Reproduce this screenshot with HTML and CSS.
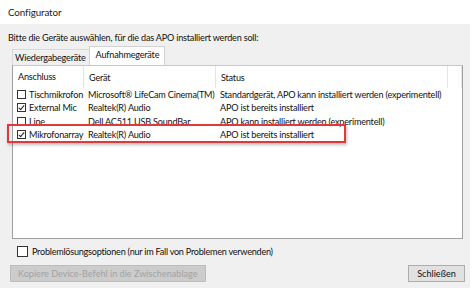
FILE: index.html
```html
<!DOCTYPE html>
<html lang="de">
<head>
    <meta charset="UTF-8">
    <title>Configurator</title>
    <link rel="stylesheet" href="styles.css">
</head>
<body>
    <div class="window">
        <div class="titlebar">Configurator</div>
        <div class="dialog">
            <p class="hint">Bitte die Geräte auswählen, für die das APO installiert werden soll:</p>

            <div class="tabs">
                <div class="tab">Wiedergabegeräte</div>
                <div class="tab active">Aufnahmegeräte</div>
            </div>

            <div class="list">
                <div class="row head">
                    <div class="cell">Anschluss</div>
                    <div class="cell">Gerät</div>
                    <div class="cell">Status</div>
                    <div class="cell"></div>
                </div>
                <div class="row">
                    <div class="cell"><span class="check"></span>Tischmikrofon</div>
                    <div class="cell">Microsoft® LifeCam Cinema(TM)</div>
                    <div class="cell">Standardgerät, APO kann installiert werden (experimentell)</div>
                </div>
                <div class="row">
                    <div class="cell"><span class="check on"></span>External Mic</div>
                    <div class="cell">Realtek(R) Audio</div>
                    <div class="cell">APO ist bereits installiert</div>
                </div>
                <div class="row">
                    <div class="cell"><span class="check"></span>Line</div>
                    <div class="cell">Dell AC511 USB SoundBar</div>
                    <div class="cell">APO kann installiert werden (experimentell)</div>
                </div>
                <div class="row">
                    <div class="cell"><span class="check on"></span>Mikrofonarray</div>
                    <div class="cell">Realtek(R) Audio</div>
                    <div class="cell">APO ist bereits installiert</div>
                </div>
                <!-- annotation drawn over the list -->
                <div class="highlight"></div>
            </div>

            <label class="option"><span class="check big"></span>Problemlösungsoptionen (nur im Fall von Problemen verwenden)</label>

            <div class="buttons">
                <button class="btn" disabled>Kopiere Device-Befehl in die Zwischenablage</button>
                <button class="btn close">Schließen</button>
            </div>
        </div>
    </div>
</body>
</html>
```

FILE: styles.css
```css
body {
    margin: 0;
    background: #fff;
    font-family: Lato, sans-serif;
    font-size: 9.1px;
    letter-spacing: -0.2px;
    color: #111;
}

.window {
    width: 470px;
    height: 288px;
    display: flex;
    flex-direction: column;
}

.titlebar {
    height: 24px;
    line-height: 24px;
    padding-left: 8px;
    font-size: 9.8px;
    letter-spacing: -0.1px;
    color: #222;
    background: #fff;
}

.dialog {
    flex: 1;
    background: #f0f0f0;
    padding: 0 5px 0 8px;
}

.hint {
    margin: 0;
    padding-top: 7px;
    height: 15px;
    line-height: 13px;
}

.tabs {
    display: flex;
    align-items: flex-end;
    height: 19px;
    margin-left: 4px;
}

.tab {
    height: 15px;
    line-height: 15px;
    padding: 0 3px 0 2px;
    border: 1px solid #d9d9d9;
    border-bottom: none;
    background: #f0f0f0;
}

.tab.active {
    height: 18px;
    line-height: 16px;
    padding: 0 5px 0 6px;
    background: #fff;
    border-color: #d2d2d2;
    margin-left: -1px;
}

.list {
    position: relative;
    margin: 0 2px 0 4px;
    height: 172px;
    background: #fff;
    border: 1px solid #a0a0a0;
    border-top-color: #c8c8c8;
}

.row {
    display: grid;
    grid-template-columns: 71px 132px 232px 1fr;
    height: 13.33px;
    line-height: 13.33px;
    white-space: nowrap;
}

.row.head {
    height: 22px;
    line-height: 24px;
}

.head .cell {
    padding-left: 5px;
    border-right: 1px solid #e5e5e5;
}

.cell {
    padding-left: 4px;
    overflow: hidden;
}

.row .cell:first-child {
    display: flex;
    align-items: center;
}

.check {
    width: 9px;
    height: 9px;
    border: 1px solid #333;
    background: #fff;
    margin-right: 3px;
    flex: none;
    box-sizing: border-box;
    display: inline-block;
    position: relative;
}

.check.on::after {
    content: "";
    position: absolute;
    left: 2px;
    top: 0px;
    width: 2px;
    height: 5px;
    border: solid #222;
    border-width: 0 1px 1px 0;
    transform: rotate(40deg);
}

.check.big {
    width: 11px;
    height: 11px;
}

.highlight {
    position: absolute;
    left: -6px;
    top: 58px;
    width: 339px;
    height: 19px;
    box-sizing: border-box;
    border: 2px solid #e0393b;
    box-shadow: 1px 2px 3px rgba(0, 0, 0, 0.25);
}

.option {
    display: flex;
    align-items: center;
    gap: 1px;
    margin: 6px 0 0 9px;
    height: 12px;
    letter-spacing: -0.25px;
}

.buttons {
    display: flex;
    justify-content: space-between;
    margin-top: 8px;
    padding-left: 2px;
}

.btn {
    font: inherit;
    height: 17px;
    padding: 0 7px;
    border: 1px solid #bcbcbc;
    background: #cccccc;
    color: #a2a2a2;
}

.btn.close {
    width: 57px;
    padding: 0;
    color: #111;
    background: #e1e1e1;
    border-color: #adadad;
}
```
